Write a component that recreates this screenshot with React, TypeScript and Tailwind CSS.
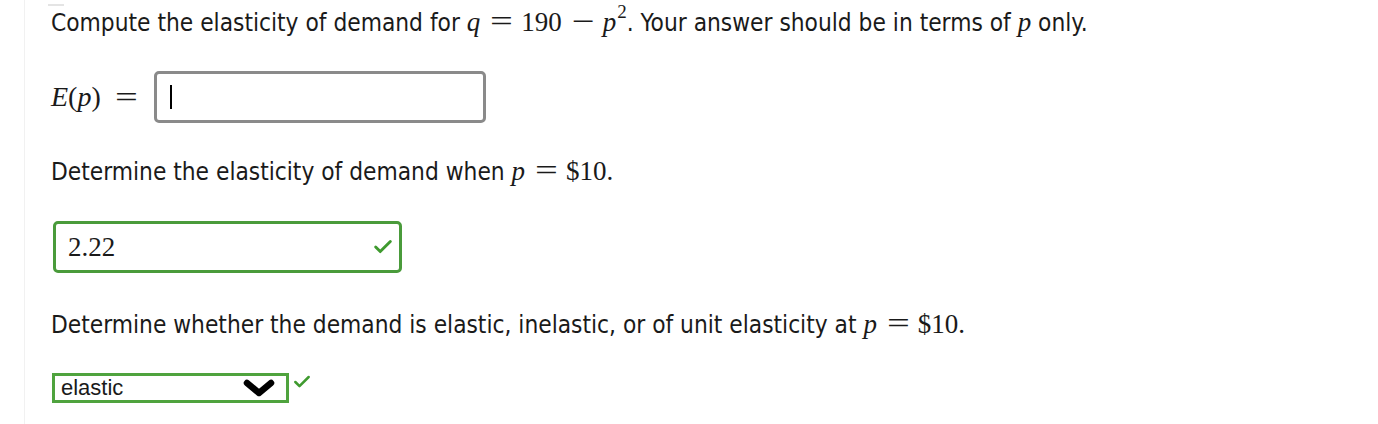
import { Check } from 'lucide-react';

const sans = { fontFamily: '"DejaVu Sans", sans-serif' };

function M({ children }: { children: React.ReactNode }) {
  return <span className="font-['Liberation_Serif',serif] text-[27px] leading-none">{children}</span>;
}

function I({ children }: { children: React.ReactNode }) {
  return <span className="italic font-['Liberation_Serif',serif] text-[27px] leading-none">{children}</span>;
}

// binary operator with math-style spacing (MathJax's = and − are wider than Times)
function Op({ children }: { children: React.ReactNode }) {
  return (
    <span className="inline-block font-['Liberation_Serif',serif] text-[30px] leading-none scale-x-[1.35] ml-[13px] mr-[11px]">
      {children}
    </span>
  );
}

export default function App() {
  return (
    <div className="w-[1378px] h-[424px] bg-white overflow-hidden flex">
      <div className="w-[25px] border-r border-[#f1f1f1] shrink-0" />
      <div className="flex-1 pl-[26px] text-[24.25px] font-stretch-condensed text-[#1a1a1a] relative" style={sans}>
        <div className="absolute left-[23px] top-[4px] w-[16px] h-[2px] bg-[#e4e4e4]" />

        <p className="pt-[6px] leading-[30px] whitespace-nowrap">
          Compute the elasticity of demand for <I>q</I><Op>=</Op><M>190</M><Op>−</Op><I>p</I>
          <span className="font-['Liberation_Serif',serif] text-[19px] leading-none relative -top-[13px] ml-[1px]">2</span>. Your answer should be in terms of <I>p</I> only.
        </p>

        <div className="flex items-center mt-[33px]">
          <span className="font-['Liberation_Serif',serif] text-[28px] leading-none">
            <span className="italic">E</span>(<span className="italic">p</span>)
          </span>
          <span className="inline-block font-['Liberation_Serif',serif] text-[30px] leading-none scale-x-[1.35] ml-[17px] mr-[19px]">=</span>
          <div className="w-[332px] h-[52px] border-[3px] border-[#8a8a8a] rounded-[5px] flex items-center pl-[13px]">
            <div className="w-[2px] h-[24px] bg-black" />
          </div>
        </div>

        <p className="mt-[32px] leading-[30px] whitespace-nowrap">
          Determine the elasticity of demand when <I>p</I><Op>=</Op><M>$10.</M>
        </p>

        <div className="mt-[34px] ml-[2px] w-[349px] h-[52px] border-[3px] border-[#4a9b3b] rounded-[5px] flex items-center justify-between pl-[12px] pr-[5px]">
          <span className="font-['Liberation_Serif',serif] text-[27px] leading-none">2.22</span>
          <Check className="w-[22px] h-[22px] text-[#3f9a2f]" strokeWidth={3.2} />
        </div>

        <p className="mt-[35px] leading-[30px] whitespace-nowrap">
          Determine whether the demand is elastic, inelastic, or of unit elasticity at <I>p</I><Op>=</Op><M>$10.</M>
        </p>

        <div className="mt-[33px] ml-[1px] flex items-start">
          <div className="w-[237px] h-[30px] border-[3px] border-[#4fa33e] flex items-center justify-between pl-[6px] pr-[10px]">
            <span className="font-['Liberation_Sans',sans-serif] text-[22px] leading-none font-stretch-normal">elastic</span>
            <svg width="34" height="20" viewBox="0 0 34 20">
              <path d="M5 5 L17 15 L29 5" fill="none" stroke="black" strokeWidth="6.5" strokeLinecap="round" strokeLinejoin="round" />
            </svg>
          </div>
          <Check className="w-[20px] h-[20px] text-[#3f9a2f] ml-[3px] -mt-[1px]" strokeWidth={3} />
        </div>
      </div>
    </div>
  );
}
